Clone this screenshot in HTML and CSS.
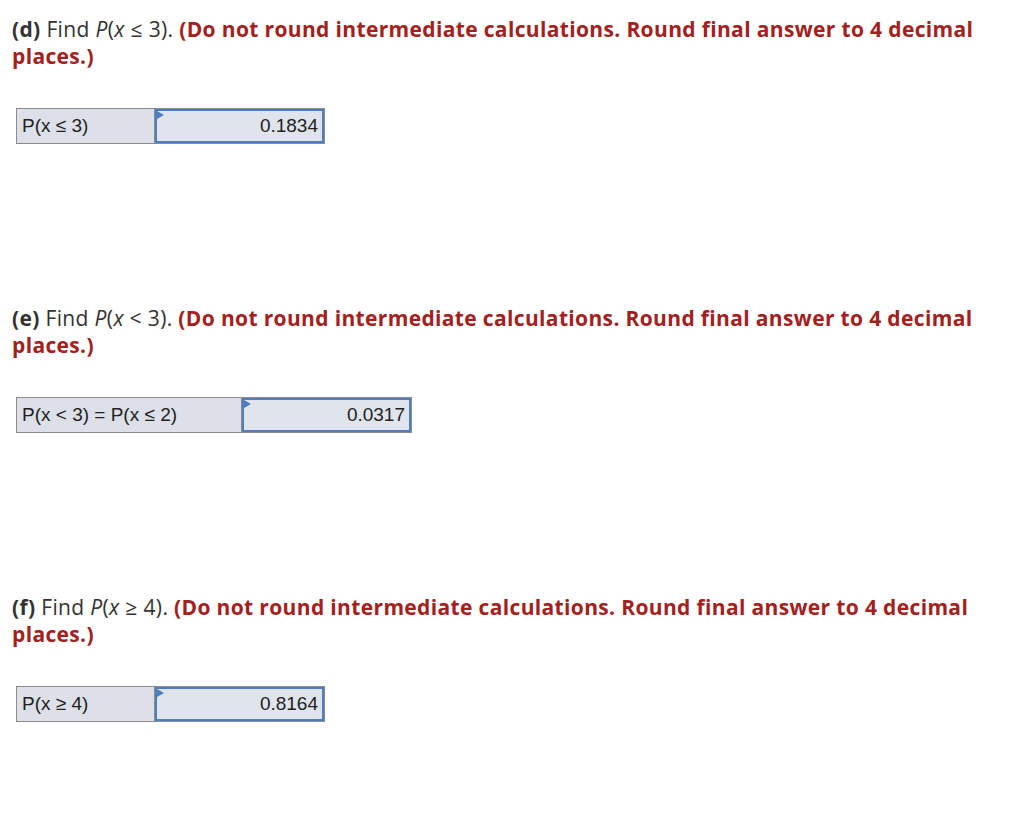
FILE: index.html
```html
<!DOCTYPE html>
<html>
<head>
<meta charset="utf-8">
<link rel="stylesheet" href="styles.css">
</head>
<body>
<div class="page">
  <section class="q">
    <p class="prompt"><b class="part">(d)</b> Find <i>P</i>(<i>x</i> ≤ 3). <span class="note">(Do not round intermediate calculations. Round final answer to 4 decimal places.)</span></p>
    <div class="answer">
      <div class="label w1">P(x ≤ 3)</div>
      <div class="input"><span class="flag"></span>0.1834</div>
    </div>
  </section>
  <section class="q">
    <p class="prompt"><b class="part">(e)</b> Find <i>P</i>(<i>x</i> &lt; 3). <span class="note">(Do not round intermediate calculations. Round final answer to 4 decimal places.)</span></p>
    <div class="answer">
      <div class="label w2">P(x &lt; 3) = P(x ≤ 2)</div>
      <div class="input"><span class="flag"></span>0.0317</div>
    </div>
  </section>
  <section class="q last">
    <p class="prompt"><b class="part">(f)</b> Find <i>P</i>(<i>x</i> ≥ 4). <span class="note">(Do not round intermediate calculations. Round final answer to 4 decimal places.)</span></p>
    <div class="answer">
      <div class="label w1">P(x ≥ 4)</div>
      <div class="input"><span class="flag"></span>0.8164</div>
    </div>
  </section>
</div>
</body>
</html>
```

FILE: styles.css
```css
html, body {
  margin: 0;
  padding: 0;
  background: #ffffff;
}
.page {
  padding: 16px 0 0 12px;
  width: 975px;
}
.q {
  height: 289px;
}
.q.last {
  height: auto;
}
.prompt {
  margin: 0;
  font-family: "Open Sans", "Lato", sans-serif;
  font-size: 21px;
  letter-spacing: 0.35px;
  line-height: 27px;
  color: #333333;
}
.prompt i {
  font-style: italic;
}
.part {
  font-weight: 700;
}
.note {
  color: #a4201d;
  font-weight: 700;
}
.answer {
  display: flex;
  margin: 38px 0 0 4px;
  width: max-content;
  border: 1px solid #8c8c8c;
  font-family: "Liberation Sans", Arial, sans-serif;
  font-size: 19px;
  color: #222222;
}
.label {
  background: #dde0e8;
  border-right: 1px solid #8c8c8c;
  padding: 0 5px;
  height: 34px;
  line-height: 34px;
  box-sizing: border-box;
}
.w1 { width: 138px; }
.w2 { width: 225px; }
.input {
  position: relative;
  width: 169px;
  height: 34px;
  box-sizing: border-box;
  border: 2px solid #4f7dc2;
  background: #e0e4ec;
  text-align: right;
  padding-right: 4px;
  line-height: 30px;
}
.flag {
  position: absolute;
  left: 0;
  top: 0;
  width: 0;
  height: 0;
  border-top: 4px solid transparent;
  border-bottom: 4px solid transparent;
  border-left: 7px solid #4f7dc2;
}
```
